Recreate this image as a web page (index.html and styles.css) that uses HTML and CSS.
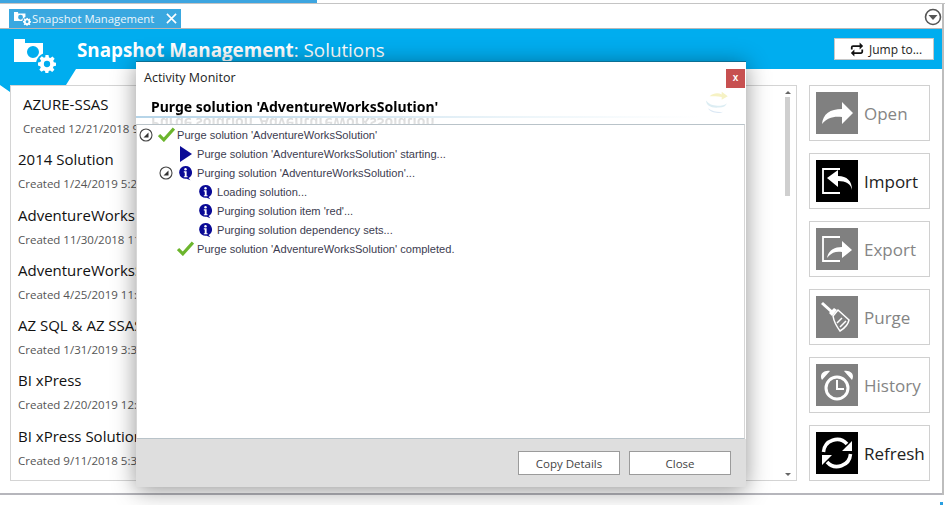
FILE: index.html
```html
<!DOCTYPE html>
<html lang="en">
<head>
<meta charset="utf-8">
<title>Snapshot Management</title>
<link rel="stylesheet" href="styles.css">
</head>
<body>
<svg class="defs" width="0" height="0" aria-hidden="true">
  <defs>
    <symbol id="gear" viewBox="0 0 20 20">
      <path fill="currentColor" fill-rule="evenodd" d="M8.300 0h3.400l.5 2.700 1.600.7 2.300-1.600 2.400 2.400-1.600 2.300.7 1.600 2.400.5v3.400l-2.700.5-.7 1.600 1.600 2.300-2.400 2.400-2.300-1.600-1.600.7-.5 2.600H8.300l-.5-2.700-1.600-.7-2.300 1.600-2.400-2.400 1.600-2.300-.7-1.600L0 11.700V8.300l2.700-.5.7-1.600-1.600-2.300 2.400-2.400 2.300 1.600 1.600-.7zM10 6.500a3.500 3.500 0 1 0 0 7 3.500 3.500 0 0 0 0-7z"/>
    </symbol>
    <symbol id="check" viewBox="0 0 16 14">
      <path fill="none" stroke="#6cb52d" stroke-width="3" d="M1 7.500l4.500 4.500L15 1.500"/>
    </symbol>
    <symbol id="info" viewBox="0 0 16 16">
      <path fill="#0a0a96" d="M8 .5a6.800 6.800 0 0 1 3.300 12.800l1.900 2.400-4-1.700A6.800 6.800 0 1 1 8 .5z"/>
      <circle cx="8" cy="4" r="1.300" fill="#fff"/>
      <path fill="#fff" d="M6.200 6.200h3v5.200h1v1.200H6.200v-1.200h1V7.400h-1z"/>
    </symbol>
    <symbol id="collapse" viewBox="0 0 14 14">
      <circle cx="7" cy="7" r="6" fill="#fff" stroke="#444" stroke-width="1.100"/>
      <path fill="#333" d="M9.500 4.500v5h-5z"/>
    </symbol>
  </defs>
</svg>

<div class="topbar"><span class="topbar-accent"></span></div>

<main class="window">
  <div class="tabs">
    <div class="tab">
      <svg class="tab-icon" viewBox="0 0 22 18" aria-hidden="true">
        <path fill="#fff" fill-rule="evenodd" d="M0 1h5v2h9v9H0zM8 4.500a3 3 0 1 0 0 6 3 3 0 0 0 0-6z"/>
        <circle cx="16" cy="13" r="6" fill="#3aa8e0"/>
        <use href="#gear" x="11" y="8" width="10" height="10" color="#fff"/>
      </svg>
      <span class="tab-label">Snapshot Management</span>
      <svg class="tab-close" viewBox="0 0 12 12" aria-hidden="true"><path stroke="#fff" stroke-width="1.800" d="M1 1l10 10M11 1L1 11"/></svg>
    </div>
    <svg class="tabs-menu" viewBox="0 0 18 18" aria-hidden="true">
      <circle cx="9" cy="9" r="7.500" fill="#fff" stroke="#555" stroke-width="1.600"/>
      <path fill="#555" d="M4.500 7h9L9 12z"/>
    </svg>
  </div>

  <header class="banner">
    <div class="banner-logo">
      <svg class="logo-icon" viewBox="0 0 44 36" aria-hidden="true">
        <path fill="#fff" fill-rule="evenodd" d="M0 0h11v4h18v19H0zM19 7a6 6 0 1 0 0 12 6 6 0 0 0 0-12z"/>
        <circle cx="33" cy="25" r="11" fill="#00adef"/>
        <use href="#gear" x="24" y="16" width="18" height="18" color="#fff"/>
      </svg>
    </div>
    <h1 class="banner-title"><strong>Snapshot Management</strong>: Solutions</h1>
    <button class="jump">
      <svg class="jump-icon" viewBox="0 0 16 16" aria-hidden="true">
        <path fill="none" stroke="#111" stroke-width="2" d="M2 8V5.500A1.500 1.500 0 0 1 3.500 4H12M14 8v2.500a1.500 1.500 0 0 1-1.500 1.500H4"/>
        <path fill="#111" d="M11 0l4 4-4 4zM5 8l-4 4 4 4z"/>
      </svg>
      <span>Jump to...</span>
    </button>
  </header>

  <div class="content">
    <section class="list">
      <div class="rows">
        <div class="row row-first"><div class="row-title">AZURE-SSAS</div><div class="row-date">Created 12/21/2018 9:15 AM</div></div>
        <div class="row"><div class="row-title">2014 Solution</div><div class="row-date">Created 1/24/2019 5:22 PM</div></div>
        <div class="row"><div class="row-title">AdventureWorks Solution</div><div class="row-date">Created 11/30/2018 11:04 AM</div></div>
        <div class="row"><div class="row-title">AdventureWorksSolution</div><div class="row-date">Created 4/25/2019 11:36 AM</div></div>
        <div class="row"><div class="row-title">AZ SQL &amp; AZ SSAS</div><div class="row-date">Created 1/31/2019 3:30 PM</div></div>
        <div class="row"><div class="row-title">BI xPress</div><div class="row-date">Created 2/20/2019 12:45 PM</div></div>
        <div class="row"><div class="row-title">BI xPress Solution</div><div class="row-date">Created 9/11/2018 5:30 PM</div></div>
      </div>
      <div class="scrollbar">
        <span class="arrow-up"></span>
        <span class="thumb"></span>
        <span class="arrow-down"></span>
      </div>
    </section>

    <nav class="actions">
      <button class="action is-disabled">
        <span class="action-icon"><svg viewBox="0 0 42 42" aria-hidden="true"><path fill="#fff" d="M6 32c1-10 8-15 20-15V10l11 11-11 11v-7c-9-1-15 1-20 7z"/></svg></span>
        <span>Open</span>
      </button>
      <button class="action">
        <span class="action-icon"><svg viewBox="0 0 42 42" aria-hidden="true"><path fill="none" stroke="#fff" stroke-width="1.800" d="M24 9H7v24h17"/><path fill="#fff" d="M36 30c-1-6-6-9-14-9v6L11 18l11-8v6c9 0 14 5 14 14z"/></svg></span>
        <span>Import</span>
      </button>
      <button class="action is-disabled">
        <span class="action-icon"><svg viewBox="0 0 42 42" aria-hidden="true"><path fill="none" stroke="#fff" stroke-width="1.800" d="M24 9H7v24h17"/><path fill="#fff" d="M11 30c1-7 7-11 15-11v-6l10 9-10 8v-6c-7-1-11 1-15 6z"/></svg></span>
        <span>Export</span>
      </button>
      <button class="action is-disabled">
        <span class="action-icon"><svg viewBox="0 0 42 42" aria-hidden="true"><path stroke="#fff" stroke-width="3" d="M6 7l10 9"/><path fill="#fff" d="M13 17l5-5 3 2-5 6z"/><path fill="none" stroke="#fff" stroke-width="1.500" d="M17 20l5-6 11 10c-1 5-4 8-9 11-3-4-6-9-7-15zM21 27l5-5M24 31l6-6"/></svg></span>
        <span>Purge</span>
      </button>
      <button class="action is-disabled">
        <span class="action-icon"><svg viewBox="0 0 42 42" aria-hidden="true"><circle cx="21" cy="24" r="11" fill="none" stroke="#fff" stroke-width="3"/><path fill="none" stroke="#fff" stroke-width="2" d="M21 16v9h7"/><path fill="#fff" d="M6 16c-3-5 1-10 8-9zM36 16c3-5-1-10-8-9z"/></svg></span>
        <span>History</span>
      </button>
      <button class="action">
        <span class="action-icon"><svg viewBox="0 0 42 42" aria-hidden="true"><path fill="none" stroke="#fff" stroke-width="3.500" d="M7.500 20A13.500 13.500 0 0 1 31 12M34.500 22A13.500 13.500 0 0 1 11 30"/><path fill="#fff" d="M36 9v10H26zM6 33V23h10z"/></svg></span>
        <span>Refresh</span>
      </button>
    </nav>
  </div>
  <div class="bottom-rule"></div>
</main>
<span class="corner-dot"></span>

<div class="dialog" role="dialog">
  <div class="dialog-head">
    <div class="dialog-title">Activity Monitor</div>
    <button class="dialog-x">x</button>
    <div class="dialog-heading">Purge solution 'AdventureWorksSolution'</div>
    <div class="dialog-rule"></div>
    <svg class="dialog-logo" viewBox="0 0 28 30" aria-hidden="true">
      <path fill="#f6f2c4" d="M6 6c5-4 10-4 14-2V1l7 5-7 4V7C15 6 10 6 6 6z"/>
      <path fill="#dcedf3" d="M2 11c0 6 6 9 15 8 5 0 8-2 9-5-2 2-6 3-11 3-6 0-10-2-13-6z"/>
      <path fill="#dbe8f5" d="M4 20c3 5 12 7 18 4-5 1-12 0-18-4z"/>
    </svg>
  </div>
  <div class="log">
    <div class="log-row"><svg class="ico-toggle"><use href="#collapse"/></svg><svg class="ico-check"><use href="#check"/></svg><span>Purge solution 'AdventureWorksSolution'</span></div>
    <div class="log-row lvl-1"><span class="ico-slot"></span><svg class="ico-play" viewBox="0 0 12 16" aria-hidden="true"><path fill="#0a0a96" d="M0 0l12 8-12 8z"/></svg><span>Purge solution 'AdventureWorksSolution' starting...</span></div>
    <div class="log-row lvl-1"><svg class="ico-toggle"><use href="#collapse"/></svg><svg class="ico-info"><use href="#info"/></svg><span>Purging solution 'AdventureWorksSolution'...</span></div>
    <div class="log-row lvl-2"><svg class="ico-info"><use href="#info"/></svg><span>Loading solution...</span></div>
    <div class="log-row lvl-2"><svg class="ico-info"><use href="#info"/></svg><span>Purging solution item 'red'...</span></div>
    <div class="log-row lvl-2"><svg class="ico-info"><use href="#info"/></svg><span>Purging solution dependency sets...</span></div>
    <div class="log-row lvl-1"><span class="ico-slot"></span><svg class="ico-check"><use href="#check"/></svg><span>Purge solution 'AdventureWorksSolution' completed.</span></div>
  </div>
  <div class="dialog-foot">
    <button class="foot-btn">Copy Details</button>
    <button class="foot-btn">Close</button>
  </div>
</div>
</body>
</html>
```
FILE: styles.css
```css
* { box-sizing: border-box; }
html, body { margin: 0; padding: 0; }
body {
  width: 947px;
  height: 505px;
  overflow: hidden;
  background: #fff;
  font-family: "Open Sans", "Noto Sans", sans-serif;
  position: relative;
}
button { font-family: inherit; cursor: default; }
.defs { position: absolute; }

.topbar { height: 4px; border-bottom: 1px solid #c4c4c4; width: 945px; }
.topbar-accent { display: block; width: 317px; height: 3px; background: #3da5e0; }

.window { width: 944px; height: 491px; border-right: 2px solid #bdbdbd; }

.tabs { height: 25px; padding: 5px 0 0 9px; display: flex; align-items: flex-start; justify-content: space-between; border-bottom: 1px solid #b8b8b8; }
.tab { width: 172px; height: 19px; background: #3aa8e0; color: #fff; display: flex; align-items: center; padding-left: 5px; }
.tab-icon { width: 18px; height: 15px; flex: none; }
.tab-label { font-size: 11.300px; color: #eef7fc; white-space: nowrap; }
.tab-close { width: 11px; height: 11px; margin-left: 12px; flex: none; }
.tabs-menu { width: 18px; height: 18px; margin-top: -1px; }

.banner { height: 40px; background: #00adef; display: flex; align-items: center; position: relative; padding-left: 77px; padding-right: 8px; }
.banner-logo { position: absolute; left: 0; top: 0; width: 76px; height: 64px; background: #00adef; clip-path: polygon(0 0, 76px 0, 76px 40px, 66px 56px, 10px 56px, 10px 63px, 0 56px); }
.logo-icon { position: absolute; left: 14px; top: 10px; width: 44px; height: 36px; }
.banner-title { margin: 0; color: #fff; font-size: 18.800px; font-weight: 400; line-height: 40px; white-space: nowrap; flex: 1; position: relative; top: 1px; }
.banner-title strong { font-weight: 700; }
.jump { width: 100px; height: 22px; background: #fff; border: 1px solid #c8c8c8; padding: 0 0 0 15px; display: flex; align-items: center; gap: 5px; font-size: 12px; color: #222; }
.jump-icon { width: 14px; height: 15px; flex: none; }

.content { display: flex; padding: 16px 0 0 10px; height: 424px; }
.list { width: 787px; height: 396px; border: 1px solid #d4d4d4; display: flex; }
.rows { flex: 1; padding: 7px 0 0 7px; }
.row { height: 55.300px; }
.row-first { padding-left: 5px; }
.row-title { font-size: 15px; color: #111; line-height: 22px; white-space: nowrap; }
.row-date { font-size: 11.500px; color: #555; line-height: 17px; margin-top: 5px; white-space: nowrap; }
.scrollbar { width: 17px; display: flex; flex-direction: column; align-items: center; padding-top: 5px; position: relative; margin-left: -10px; }
.arrow-up { width: 0; height: 0; border: 3.500px solid transparent; border-top: 0; border-bottom: 3.500px solid #666; }
.thumb { width: 5px; height: 99px; margin-top: 3px; background: #cfcfcf; }
.arrow-down { width: 0; height: 0; border: 3.500px solid transparent; border-bottom: 0; border-top: 3.500px solid #666; position: absolute; bottom: 4px; }

.actions { margin-left: 12px; display: flex; flex-direction: column; gap: 12px; width: 121px; }
.action { width: 121px; height: 56px; background: #fff; border: 1px solid #d0d0d0; padding: 0 0 0 6px; display: flex; align-items: center; gap: 6px; font-size: 17px; color: #222; }
.action-icon { width: 42px; height: 42px; background: #000; display: block; flex: none; }
.action-icon svg { display: block; width: 42px; height: 42px; }
.is-disabled { color: #858585; }
.is-disabled .action-icon { background: #808080; }

.bottom-rule { height: 2px; background: #b6b6bc; }
.corner-dot { position: absolute; left: 940px; top: 502px; width: 3px; height: 3px; background: #2a9fe0; }

.dialog { position: absolute; left: 136px; top: 61px; width: 610px; height: 426px; background: #fff; border-top: 1px solid #0b6f94; box-shadow: 0 3px 22px rgba(0, 0, 0, .42); display: flex; flex-direction: column; }
.dialog-head { height: 62px; position: relative; overflow: hidden; flex: none; }
.dialog-title { position: absolute; left: 8px; top: 7px; font-size: 12.500px; color: #222; line-height: 17px; }
.dialog-x { position: absolute; right: 1px; top: 7px; width: 19px; height: 19px; background: #c75050; border: 0; padding: 0 0 2px; color: #fff; font-size: 10px; font-weight: 700; font-family: "Liberation Sans", sans-serif; line-height: 1; }
.dialog-heading { position: absolute; left: 15px; top: 35px; font-size: 14px; font-weight: 700; color: #000; line-height: 19px; white-space: nowrap; font-family: "Noto Sans", sans-serif; -webkit-box-reflect: below -2px linear-gradient(rgba(0, 0, 0, 0) 0, rgba(0, 0, 0, .1) 30%, rgba(0, 0, 0, .16) 100%); }
.dialog-rule { position: absolute; left: 0; top: 54px; width: 565px; height: 2px; background: linear-gradient(90deg, #b5d4e8, #eef6fa 70%, #fff); }
.dialog-logo { position: absolute; left: 567px; top: 29px; width: 27px; height: 26px; }

.log { flex: 1; border-top: 1px solid #b9c3c9; border-bottom: 1px solid #b9c3c9; padding: 0 0 0 2px; margin-right: 1px; border-right: 1px solid #d6d6d6; border-left: 1px solid #d6d6d6; }
.log-row { height: 19px; display: flex; align-items: center; font-family: "Liberation Sans", sans-serif; font-size: 11.100px; color: #3c3c50; white-space: nowrap; }
.log-row svg { flex: none; }
.log-row span:last-child { margin-left: 2px; }
.lvl-1 { padding-left: 20px; }
.lvl-2 { padding-left: 59px; }
.ico-toggle { width: 14px; height: 14px; margin-right: 5px; }
.ico-slot { width: 19px; flex: none; }
.ico-check { width: 17px; height: 15px; }
.ico-info { width: 15px; height: 16px; margin-right: 2px; }
.ico-play { width: 12px; height: 16px; margin-left: 2px; margin-right: 3px; }
.lvl-1 .ico-check { margin-left: -1px; margin-right: 1px; }

.dialog-foot { height: 48px; background: #dedede; flex: none; display: flex; justify-content: flex-end; gap: 9px; padding: 12px 15px 0 0; }
.foot-btn { width: 102px; height: 24px; background: #fff; border: 1px solid #9b9b9b; font-size: 11.500px; color: #444; padding: 0; }
```
